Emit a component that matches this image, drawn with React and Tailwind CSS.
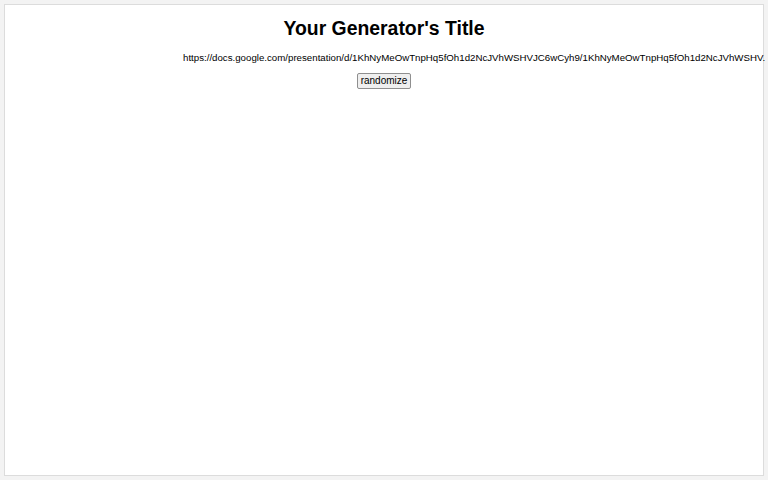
export default function App() {
  return (
    <div className="h-screen w-full overflow-hidden bg-[#f3f3f3] p-1">
      <div className="h-full border border-[#dcdcdc] bg-white" style={{ fontFamily: '"Liberation Sans", Arial, sans-serif' }}>
        <h1 className="mt-[12px] text-center text-[19.4px] font-bold leading-[23px] text-black">Your Generator's Title</h1>
        <div className="mx-auto mt-[12px] w-[402px] whitespace-nowrap text-[9.7px] leading-[12px] text-black">
          https://docs.google.com/presentation/d/1KhNyMeOwTnpHq5fOh1d2NcJVhWSHVJC6wCyh9/1KhNyMeOwTnpHq5fOh1d2NcJVhWSHV.
        </div>
        <div className="mt-[9px] flex justify-center">
          <button className="rounded-[2px] border border-[#8f8f8f] bg-[#efefef] px-[3px] py-[1px] text-[10px] leading-[12px] text-black">randomize</button>
        </div>
      </div>
    </div>
  );
}
